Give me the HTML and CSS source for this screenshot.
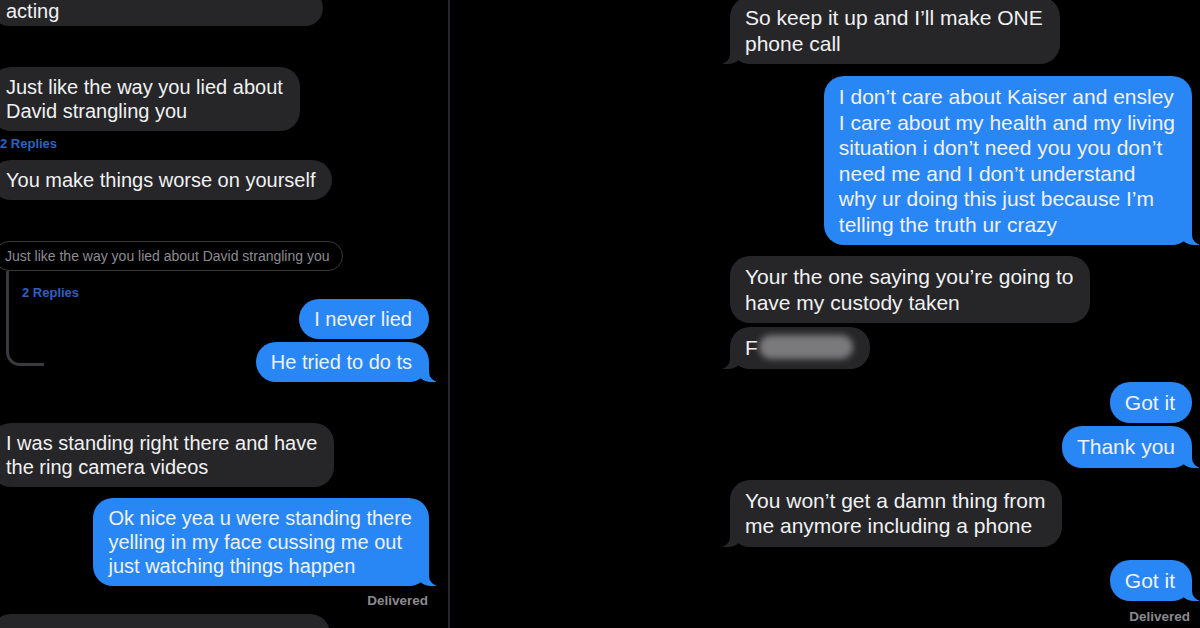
FILE: index.html
```html
<!DOCTYPE html>
<html lang="en">
<head>
    <meta charset="UTF-8">
    <meta name="viewport" content="width=device-width, initial-scale=1.0">
    <title>Messages</title>
    <link rel="stylesheet" href="styles.css">
</head>
<body>
    <div class="shots">
        <!-- left screenshot -->
        <div class="chat chat-left">
            <div class="bubble in first-left">acting</div>
            <div class="bubble in gap-xl">Just like the way you lied about<br>David strangling you</div>
            <div class="replies replies-top">2 Replies</div>
            <div class="bubble in gap-s">You make things worse on yourself</div>

            <div class="quote">Just like the way you lied about David strangling you</div>
            <div class="thread-row">
                <div class="thread">
                    <span class="replies">2 Replies</span>
                </div>
                <div class="thread-msgs">
                    <div class="bubble out">I never lied</div>
                    <div class="bubble out tail stack">He tried to do ts</div>
                </div>
            </div>

            <div class="bubble in gap-xl">I was standing right there and have<br>the ring camera videos</div>
            <div class="bubble out tail gap-m">Ok nice yea u were standing there<br>yelling in my face cussing me out<br>just watching things happen</div>
            <div class="delivered">Delivered</div>
            <div class="bubble in last-left"></div>
        </div>

        <div class="divider"></div>

        <!-- right screenshot -->
        <div class="chat chat-right">
            <div class="bubble in tail first-right">So keep it up and I&#8217;ll make ONE<br>phone call</div>
            <div class="bubble out tail gap-m">I don&#8217;t care about Kaiser and ensley<br>I care about my health and my living<br>situation i don&#8217;t need you you don&#8217;t<br>need me and I don&#8217;t understand<br>why ur doing this just because I&#8217;m<br>telling the truth ur crazy</div>
            <div class="bubble in gap-n">Your the one saying you&#8217;re going to<br>have my custody taken</div>
            <div class="bubble in tail stack">F<span class="blurred"></span></div>
            <div class="bubble out gap-w">Got it</div>
            <div class="bubble out tail stack-s">Thank you</div>
            <div class="bubble in tail gap-m">You won&#8217;t get a damn thing from<br>me anymore including a phone</div>
            <div class="bubble out tail gap-w">Got it</div>
            <div class="delivered">Delivered</div>
        </div>
    </div>
</body>
</html>
```

FILE: styles.css
```css
*{
    padding: 0;
    margin: 0;
    box-sizing: border-box;
}
body{
    background-color: #000;
    font-family: "Liberation Sans", Arial, sans-serif;
    color: #f1f1f3;
}
.shots{
    display: flex;
    width: 1200px;
    height: 628px;
    overflow: hidden;
}
.chat{
    display: flex;
    flex-direction: column;
    align-items: flex-start;
    height: 628px;
}
.chat-left{
    width: 448px;
    padding-right: 19px;
    font-size: 20px;
    line-height: 24px;
}
.divider{
    width: 2px;
    height: 628px;
    background-color: #23262f;
}
.chat-right{
    flex: 1;
    padding-left: 280px;
    padding-right: 8px;
    font-size: 21px;
    line-height: 25.5px;
}

/* bubbles */
.bubble{
    position: relative;
    padding: 8px 17px 8px 15px;
    border-radius: 20px;
    white-space: nowrap;
    flex-shrink: 0;
}
.bubble.in{
    background-color: #262628;
}
.bubble.out{
    background-color: #2887f5;
    align-self: flex-end;
}
.chat-left .bubble.in{
    margin-left: -9px;
}
.gap-s{ margin-top: 9px; }
.gap-n{ margin-top: 11px; }
.gap-m{ margin-top: 12px; }
.gap-w{ margin-top: 14px; }
.gap-xl{ margin-top: 41px; }
.stack{ margin-top: 4px; }
.stack-s{ margin-top: 3px; }

.first-left{
    margin-top: -10px;
    padding-top: 9px;
    padding-bottom: 3px;
    width: 332px;
}
.last-left{
    margin-top: 6px;
    width: 339px;
    height: 40px;
}
.first-right{
    margin-top: -3px;
}
.chat-left .bubble.out.gap-m{
    margin-top: 11px;
}
.chat-right .bubble.out.gap-w{
    margin-top: 13px;
}

/* tails */
.bubble.tail::before,
.bubble.tail::after{
    content: "";
    position: absolute;
    bottom: 0;
    height: 20px;
}
.bubble.out.tail::before{
    right: -7px;
    width: 20px;
    background-color: #2887f5;
    border-bottom-left-radius: 15px 14px;
}
.bubble.out.tail::after{
    right: -10px;
    width: 10px;
    background-color: #000;
    border-bottom-left-radius: 10px;
}
.bubble.in.tail::before{
    left: -7px;
    width: 20px;
    background-color: #262628;
    border-bottom-right-radius: 15px 14px;
}
.bubble.in.tail::after{
    left: -10px;
    width: 10px;
    background-color: #000;
    border-bottom-right-radius: 10px;
}

/* replies / thread */
.replies{
    font-size: 13px;
    line-height: 14px;
    font-weight: bold;
    color: #2d62c0;
}
.replies-top{
    margin-top: 6px;
}
.quote{
    margin-top: 41px;
    margin-left: -6px;
    width: 349px;
    height: 30px;
    padding-left: 10px;
    border: 1px solid #39393d;
    border-radius: 15px;
    font-size: 14px;
    line-height: 28px;
    color: #8c8c90;
    white-space: nowrap;
}
.thread-row{
    display: flex;
    align-items: flex-start;
    align-self: stretch;
}
.thread{
    margin-left: 6px;
    width: 38px;
    height: 95px;
    padding: 7px 0 0 13px;
    border-left: 3px solid #3a3a3e;
    border-bottom: 3px solid #3a3a3e;
    border-bottom-left-radius: 14px;
    white-space: nowrap;
}
.thread-msgs{
    margin-left: auto;
    padding-top: 28px;
    display: flex;
    flex-direction: column;
    align-items: flex-end;
}
.thread-msgs .bubble.out.stack{
    margin-top: 3px;
}

.delivered{
    align-self: flex-end;
    margin-top: 7px;
    margin-right: 1px;
    font-size: 13.5px;
    line-height: 15px;
    font-weight: bold;
    color: #8a8a8f;
}
.chat-right .delivered{
    margin-top: 8px;
    margin-right: 2px;
}

/* hidden word */
.blurred{
    display: inline-block;
    vertical-align: middle;
    width: 94px;
    height: 24px;
    margin: -4px 0 0 1px;
    border-radius: 12px;
    background-color: #7a7a7d;
    filter: blur(3px);
}
```
